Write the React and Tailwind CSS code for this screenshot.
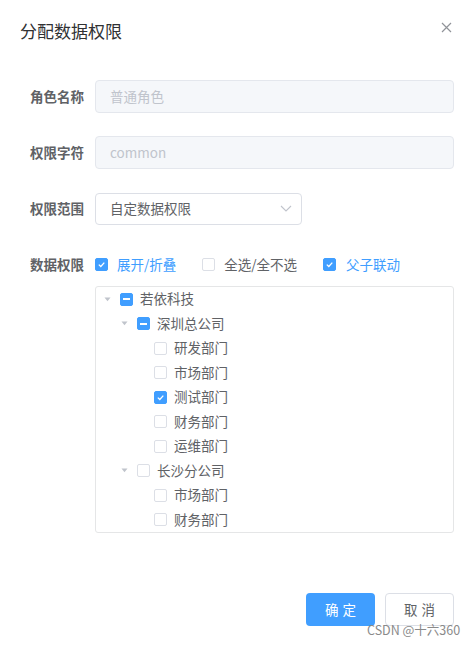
import React from 'react';

const FONT = { fontFamily: '"Noto Sans CJK SC", "Noto Sans", sans-serif' };

function Box({ state }) {
    if (state === 'checked') {
        return (
            <span className="w-[13px] h-[13px] rounded-[2px] bg-[#409eff] border border-[#409eff] flex items-center justify-center shrink-0">
                <svg width="9" height="9" viewBox="0 0 9 9">
                    <path d="M1.8 4.6 L3.8 6.5 L7.3 2.6" fill="none" stroke="#fff" strokeWidth="1.3" />
                </svg>
            </span>
        );
    }
    if (state === 'half') {
        return (
            <span className="w-[13px] h-[13px] rounded-[2px] bg-[#409eff] border border-[#409eff] flex items-center justify-center shrink-0">
                <span className="w-[7px] h-[2px] bg-white" />
            </span>
        );
    }
    return <span className="block w-[13px] h-[13px] rounded-[2px] bg-white border border-[#dcdfe6] shrink-0" />;
}

function Caret() {
    return (
        <svg width="7" height="5" viewBox="0 0 7 5">
            <path d="M0.5 0.5 L6.5 0.5 L3.5 4.2 Z" fill="#c0c4cc" />
        </svg>
    );
}

const tree = [
    { label: '若依科技', level: 0, state: 'half', arrow: true },
    { label: '深圳总公司', level: 1, state: 'half', arrow: true },
    { label: '研发部门', level: 2 },
    { label: '市场部门', level: 2 },
    { label: '测试部门', level: 2, state: 'checked' },
    { label: '财务部门', level: 2 },
    { label: '运维部门', level: 2 },
    { label: '长沙分公司', level: 1, arrow: true },
    { label: '市场部门', level: 2 },
    { label: '财务部门', level: 2 },
];

const pads = ['pl-[5px]', 'pl-[22px]', 'pl-[39px]'];

function FormRow({ label, children }) {
    return (
        <div className="flex items-center h-[33px]">
            <label className="w-[84px] text-right text-[13.5px] font-bold text-[#606266] shrink-0">{label}</label>
            <div className="ml-[11px] flex-1 flex items-center h-full">{children}</div>
        </div>
    );
}

export default function App() {
    return (
        <div className="w-[474px] h-[645px] bg-white relative flex flex-col" style={FONT}>
            <div className="flex items-center justify-between pl-5 pr-[22px] pt-[19px] h-[43px]">
                <span className="text-[17px] leading-6 text-[#303133]">分配数据权限</span>
                <svg width="11" height="11" viewBox="0 0 11 11" className="-mt-2">
                    <path d="M1 1 L10 10 M10 1 L1 10" stroke="#909399" strokeWidth="1.2" />
                </svg>
            </div>

            <div className="flex flex-col gap-[23px] mt-[37px] pr-5">
                <FormRow label="角色名称">
                    <div className="w-full h-full rounded bg-[#f5f7fa] border border-[#e4e7ed] flex items-center pl-[14px] text-[13.5px] text-[#c0c4cc]">普通角色</div>
                </FormRow>
                <FormRow label="权限字符">
                    <div className="w-full h-full rounded bg-[#f5f7fa] border border-[#e4e7ed] flex items-center pl-[14px] text-[13.5px] text-[#c0c4cc]">common</div>
                </FormRow>
                <FormRow label="权限范围">
                    <div className="w-[207px] h-[32px] rounded bg-white border border-[#dcdfe6] flex items-center justify-between pl-[14px] pr-[9px] text-[13.5px] text-[#606266]">
                        <span>自定数据权限</span>
                        <svg width="12" height="7" viewBox="0 0 12 7">
                            <path d="M1 1 L6 6 L11 1" fill="none" stroke="#c0c4cc" strokeWidth="1.1" />
                        </svg>
                    </div>
                </FormRow>
                <div>
                    <FormRow label="数据权限">
                        <div className="flex items-center gap-[26px] text-[13.5px]">
                            <div className="flex items-center gap-[9px] text-[#409eff]"><Box state="checked" /><span>展开/折叠</span></div>
                            <div className="flex items-center gap-[9px] text-[#606266]"><Box /><span>全选/全不选</span></div>
                            <div className="flex items-center gap-[10px] text-[#409eff]"><Box state="checked" /><span>父子联动</span></div>
                        </div>
                    </FormRow>
                    <div className="ml-[95px] mt-[5px] border border-[#e5e6e7] rounded-[3px]">
                        {tree.map((n, i) => (
                            <div key={i} className={`flex items-center h-[24.5px] ${pads[n.level]}`}>
                                <span className="w-[12px] flex items-center justify-center">{n.arrow ? <Caret /> : null}</span>
                                <span className="ml-[7px]"><Box state={n.state} /></span>
                                <span className="ml-[7px] text-[13.5px] leading-[18px] text-[#606266] -mt-[2px]">{n.label}</span>
                            </div>
                        ))}
                    </div>
                </div>
            </div>

            <div className="flex justify-end gap-[10px] pr-5 mt-[60px]">
                <button className="w-[69px] h-[33px] rounded bg-[#409eff] text-white text-[13.5px] tracking-[4px] pl-[4px]">确定</button>
                <button className="w-[69px] h-[33px] rounded bg-white border border-[#dcdfe6] text-[#606266] text-[13.5px] tracking-[4px] pl-[4px]">取消</button>
            </div>

            <span className="absolute left-[367px] top-[621px] text-[12.5px] text-[#8a8a8a]">CSDN @十六360</span>
        </div>
    );
}
